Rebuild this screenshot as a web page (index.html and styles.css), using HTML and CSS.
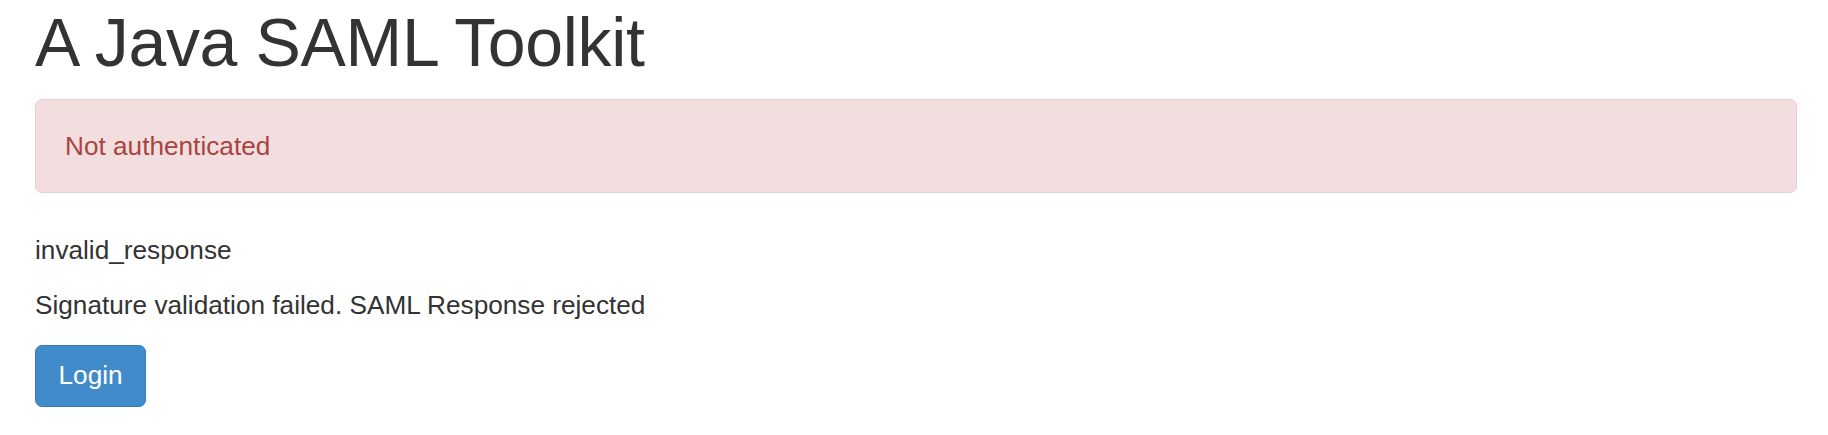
FILE: index.html
```html
<!DOCTYPE html>
<html lang="en">
<head>
<meta charset="utf-8">
<title>A Java SAML Toolkit</title>
<link rel="stylesheet" href="styles.css">
</head>
<body>
<div class="container">
  <h1 class="title">A Java SAML Toolkit</h1>
  <div class="alert alert-danger">Not authenticated</div>
  <p class="msg first">invalid_response</p>
  <p class="msg">Signature validation failed. SAML Response rejected</p>
  <a class="btn btn-primary" href="#">Login</a>
</div>
</body>
</html>
```
FILE: styles.css
```css
html, body {
  margin: 0;
  padding: 0;
  background: #ffffff;
}
body {
  font-family: "Liberation Sans", Arial, Helvetica, sans-serif;
  font-size: 26.2px;
  line-height: 37px;
  color: #333333;
}
.container {
  padding: 0 31px 0 35px;
}
.title {
  margin: 5px 0 19px;
  font-size: 68px;
  line-height: 75px;
  font-weight: 400;
  letter-spacing: -0.35px;
  color: #333333;
}
.alert {
  padding: 27.5px 29px;
  border: 1px solid #ebccd1;
  border-radius: 7px;
  background: #f2dede;
  color: #a94442;
  margin-bottom: 39px;
}
.msg {
  margin: 0 0 18px;
}
.msg + .msg {
  margin-bottom: 20.5px;
}
.btn {
  display: inline-block;
  padding: 11.5px 22.5px;
  border: 1px solid #357ebd;
  border-radius: 7px;
  background: #428bca;
  color: #ffffff;
  text-decoration: none;
  font-size: 26.2px;
  line-height: 37px;
}
```
